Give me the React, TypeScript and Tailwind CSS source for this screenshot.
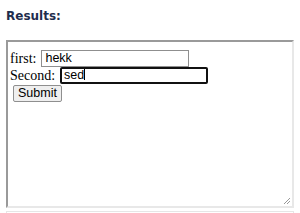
export default function App() {
  return (
    <div className="w-[300px] h-[213px] overflow-hidden bg-white">
      <div className="pl-[6px] pt-[10px] text-[12px] font-bold text-[#1f2d4d] leading-[12px]" style={{ fontFamily: '"DejaVu Sans", Verdana, sans-serif' }}>
        Results:
      </div>
      <div className="relative mx-[6px] mt-[18px] h-[168px] border-2 border-t-[#9a9a9a] border-l-[#9a9a9a] border-r-[#e8e8e8] border-b-[#e8e8e8] bg-white">
        <div className="pl-[2px] pt-[8px] text-[14px] leading-[17px] text-black" style={{ fontFamily: '"Liberation Serif", "Times New Roman", serif' }}>
          <div className="flex h-[17px] items-center">
            <span>first:</span>
            <div className="ml-[5px] h-[17px] w-[148px] border border-[#8f8f8f] bg-white pl-[3px] text-[12.5px] leading-[15px]" style={{ fontFamily: '"Liberation Sans", Arial, sans-serif' }}>
              hekk
            </div>
          </div>
          <div className="flex h-[17px] items-center">
            <span>Second:</span>
            <div className="ml-[5px] h-[17px] w-[148px] rounded-[2px] border-2 border-[#111] bg-white pl-[2px] text-[12.5px] leading-[13px]" style={{ fontFamily: '"Liberation Sans", Arial, sans-serif' }}>
              sed<span className="inline-block h-[11px] w-px bg-black align-[-1px]" />
            </div>
          </div>
          <div className="mt-[1px] flex">
            <div className="ml-[3px] h-[17px] rounded-[2px] border border-[#8f8f8f] bg-[#efefef] px-[4px] text-[12.5px] leading-[15px]" style={{ fontFamily: '"Liberation Sans", Arial, sans-serif' }}>
              Submit
            </div>
          </div>
        </div>
        <svg className="absolute bottom-[1px] right-[1px]" width="8" height="8" viewBox="0 0 8 8">
          <path d="M7 1 L1 7 M7 4 L4 7" stroke="#999" strokeWidth="1" />
        </svg>
      </div>
      <div className="mx-[6px] mt-[3px] h-[20px] border border-[#e6e6e6]" />
    </div>
  );
}
